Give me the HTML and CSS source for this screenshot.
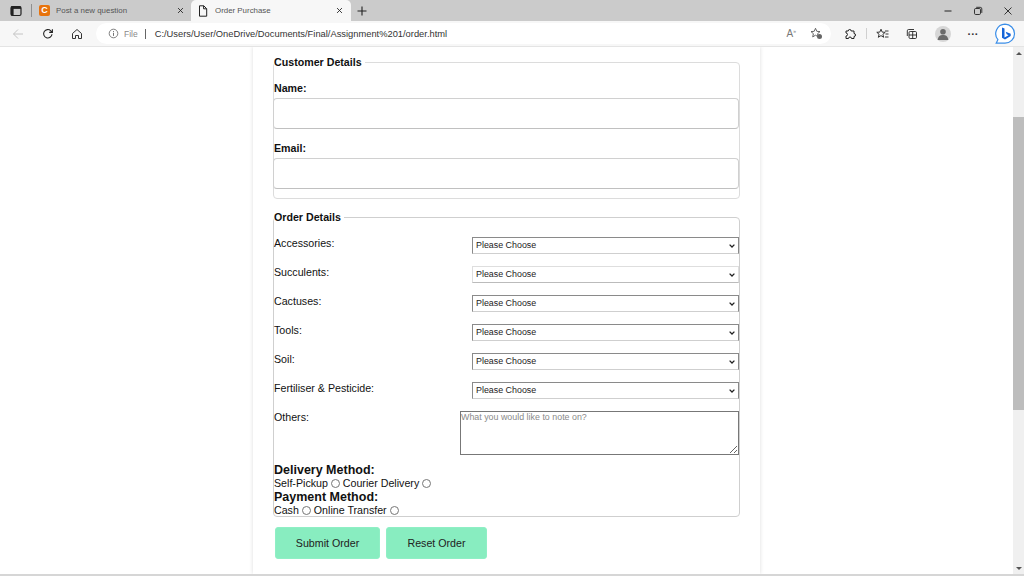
FILE: index.html
```html
<!DOCTYPE html>
<html lang="en">
<head>
<meta charset="utf-8">
<title>Order Purchase</title>
<link rel="stylesheet" href="styles.css">
</head>
<body>
<div class="browser">
  <div class="tabstrip">
    <svg class="tabs-icon" viewBox="0 0 12 12"><rect x="1" y="1.5" width="10" height="9" rx="1.5" fill="none" stroke="#222" stroke-width="1.2"/><rect x="1" y="1.5" width="10" height="2.4" fill="#222"/><rect x="1" y="1.5" width="2.6" height="9" fill="#222"/></svg>
    <span class="tab-sep"></span>
    <div class="tab">
      <span class="favicon">C</span>
      <span class="tab-title">Post a new question</span>
      <svg class="tab-close" viewBox="0 0 8 8"><path d="M1.2 1.2l5.6 5.6M6.8 1.2L1.2 6.8" stroke="#222" stroke-width="1" fill="none"/></svg>
    </div>
    <div class="tab tab-active">
      <svg class="doc-icon" viewBox="0 0 10 12"><path d="M1.5.8h4.3l2.9 2.9v7.5h-7.2zM5.6.8v3h3" fill="none" stroke="#222" stroke-width="1"/></svg>
      <span class="tab-title">Order Purchase</span>
      <svg class="tab-close" viewBox="0 0 8 8"><path d="M1.2 1.2l5.6 5.6M6.8 1.2L1.2 6.8" stroke="#222" stroke-width="1" fill="none"/></svg>
    </div>
    <svg class="new-tab" viewBox="0 0 10 10"><path d="M5 .5v9M.5 5h9" stroke="#222" stroke-width="1.1" fill="none"/></svg>
    <div class="window-controls">
      <svg viewBox="0 0 10 10"><path d="M1.5 5h7" stroke="#222" stroke-width="1" fill="none"/></svg>
      <svg viewBox="0 0 10 10"><rect x="1.5" y="2.5" width="6" height="6" rx="1.2" fill="none" stroke="#222" stroke-width=".9"/><path d="M3.2 1.3h4a1.6 1.6 0 0 1 1.6 1.6v4" fill="none" stroke="#222" stroke-width=".9"/></svg>
      <svg viewBox="0 0 10 10"><path d="M1.5 1.5l7 7M8.5 1.5l-7 7" stroke="#222" stroke-width=".9" fill="none"/></svg>
    </div>
  </div>
  <div class="toolbar">
    <svg class="tool tool-back" viewBox="0 0 12 12"><path d="M11 6H1.500M6 1.500L1.500 6 6 10.500" fill="none" stroke="#c4c4c4" stroke-width="1"/></svg>
    <svg class="tool tool-reload" viewBox="0 0 12 12"><path d="M10 6.200A4.200 4.200 0 1 1 8.800 2.800L10.400 4.400M10.400 1.200v3.200H7.200" fill="none" stroke="#222" stroke-width="1.100"/></svg>
    <svg class="tool tool-home" viewBox="0 0 12 12"><path d="M1.500 5.500L6 1.500l4.500 4v5H7.500V7.500h-3v3h-3z" fill="none" stroke="#333" stroke-width="1"/></svg>
    <div class="omnibox">
      <svg class="info" viewBox="0 0 12 12"><circle cx="6" cy="6" r="4.700" fill="none" stroke="#555" stroke-width=".8"/><path d="M6 5.200v3.400M6 3.300v1" stroke="#555" stroke-width=".9"/></svg>
      <span class="scheme">File</span>
      <span class="omni-sep"></span>
      <span class="url">C:/Users/User/OneDrive/Documents/Final/Assignment%201/order.html</span>
      <span class="read-aloud">A<sup>»</sup></span>
      <svg class="fav-add" viewBox="0 0 13 13"><path d="M5.500 1.300l1.300 3 3.200.3-2.400 2.100.7 3.200-2.800-1.700-2.800 1.700.7-3.200L1 4.600l3.200-.3z" fill="none" stroke="#555" stroke-width=".9"/><circle cx="9.500" cy="9.500" r="2.500" fill="#666"/></svg>
    </div>
    <svg class="tool tool-ext" viewBox="0 0 12 12"><path d="M2 3h2.200a1.500 1.500 0 0 1 3 0H10v2.500a1.500 1.500 0 0 1 0 3V10.500H7.500a1.500 1.500 0 0 0-3 0H2V8a1.500 1.500 0 0 0 0-3z" fill="none" stroke="#222" stroke-width="1"/></svg>
    <span class="tool-sep"></span>
    <svg class="tool tool-favs" viewBox="0 0 13 12"><path d="M5 1.200l1.200 2.900 3 .2-2.300 2 .8 3-2.700-1.700-2.700 1.700.8-3-2.300-2 3-.2zM9 3h3.500M9.500 6h3M9 9h3.500" fill="none" stroke="#222" stroke-width=".9"/></svg>
    <svg class="tool tool-coll" viewBox="0 0 12 12"><rect x="3" y="3.500" width="7.500" height="7" rx="1.200" fill="none" stroke="#222" stroke-width=".9"/><path d="M6.700 3.500v7M3 7h7.500M1.300 8V2.800A1.300 1.300 0 0 1 2.600 1.500H8" fill="none" stroke="#222" stroke-width=".9"/></svg>
    <span class="avatar"><svg viewBox="0 0 16 16"><circle cx="8" cy="5.800" r="2.800" fill="#6b6b6b"/><path d="M2.600 14c.5-3.700 2.600-5 5.400-5s4.900 1.300 5.400 5z" fill="#6b6b6b"/></svg></span>
    <span class="more">···</span>
    <svg class="bing" viewBox="0 0 22 22"><path d="M11 1.200a9.500 9.500 0 0 1 0 19H2.200l1.700-3.500A9.500 9.500 0 0 1 11 1.200z" fill="#fff" stroke="#3b8ee8" stroke-width="1.200"/><path d="M8 4.500l2.500 1v9l4-2.300-1.800-.9-1-2.500 5 2v2.300l-5.700 3.300L8 14.800z" fill="#1464d8"/></svg>
  </div>
  <div class="viewport">
    <div class="page">
      <main class="card">
        <form class="order-form">
          <fieldset class="group group-customer">
            <legend>Customer Details</legend>
            <label class="field-label" for="name">Name:</label>
            <input class="text-input" id="name" type="text">
            <label class="field-label field-label-next" for="email">Email:</label>
            <input class="text-input" id="email" type="email">
          </fieldset>
          <fieldset class="group group-order">
            <legend>Order Details</legend>
            <div class="rows">
              <div class="row"><label>Accessories:</label><select><option>Please Choose</option></select></div>
              <div class="row"><label>Succulents:</label><select class="soft"><option>Please Choose</option></select></div>
              <div class="row"><label>Cactuses:</label><select><option>Please Choose</option></select></div>
              <div class="row"><label>Tools:</label><select><option>Please Choose</option></select></div>
              <div class="row"><label>Soil:</label><select><option>Please Choose</option></select></div>
              <div class="row"><label>Fertiliser &amp; Pesticide:</label><select><option>Please Choose</option></select></div>
              <div class="row"><label>Others:</label><textarea placeholder="What you would like to note on?"></textarea></div>
            </div>
            <div class="methods">
              <h3>Delivery Method:</h3>
              <p>Self-Pickup <input type="radio" name="delivery"> Courier Delivery <input type="radio" name="delivery"></p>
              <h3>Payment Method:</h3>
              <p>Cash <input type="radio" name="payment"> Online Transfer <input type="radio" name="payment"></p>
            </div>
          </fieldset>
          <div class="actions">
            <button class="btn btn-submit" type="submit">Submit Order</button>
            <button class="btn btn-reset" type="reset">Reset Order</button>
          </div>
        </form>
      </main>
    </div>
    <div class="scrollbar">
      <span class="arrow arrow-up"></span>
      <div class="track"><div class="thumb"></div></div>
      <span class="arrow arrow-down"></span>
    </div>
  </div>
  <div class="bottom-edge"></div>
</div>
</body>
</html>
```
FILE: styles.css
```css
* { box-sizing: border-box; }
html, body { margin: 0; height: 100%; overflow: hidden; }
body { font-family: "Liberation Sans", Arial, sans-serif; font-size: 10.670px; color: #111; background: #fff; }
.browser { display: flex; flex-direction: column; width: 1024px; height: 576px; }

.tabstrip { height: 21px; flex: none; display: flex; align-items: center; background: #cbcbcb; }
.tabs-icon { width: 12px; height: 12px; margin-left: 10px; flex: none; }
.tab-sep { width: 1px; height: 13px; background: #8f8f8f; margin: 0 6px 0 9px; flex: none; }
.tab { display: flex; align-items: center; height: 21px; width: 153px; padding: 0 6px 0 1px; flex: none; }
.tab-active { width: 160px; padding: 0 7px 0 7px; background: #f7f7f7; border-radius: 5px 5px 0 0; }
.favicon { width: 11px; height: 11px; border-radius: 2px; background: #e8730c; color: #fff; font-size: 9px; font-weight: bold; line-height: 11px; text-align: center; flex: none; }
.doc-icon { width: 10px; height: 12px; flex: none; }
.tab-title { flex: 1; margin-left: 6px; font-size: 7.900px; color: #555; white-space: nowrap; overflow: hidden; }
.tab-active .tab-title { margin-left: 7px; }
.tab-close { width: 7px; height: 7px; flex: none; margin-right: 1px; }
.new-tab { width: 10px; height: 10px; margin-left: 6px; flex: none; }
.window-controls { margin-left: auto; display: flex; gap: 20px; padding-right: 11px; }
.window-controls svg { width: 10px; height: 10px; display: block; }

.toolbar { height: 26px; flex: none; display: flex; align-items: center; background: #f7f7f7; border-bottom: 1px solid #e4e4e4; }
.tool { width: 12px; height: 12px; flex: none; }
.tool-back { margin-left: 12px; }
.tool-reload { margin-left: 18px; }
.tool-home { margin-left: 17px; }
.omnibox { width: 735px; height: 21px; margin-left: 13px; flex: none; display: flex; align-items: center; background: #fff; border-radius: 11px; padding: 0 8px 0 12px; }
.info { width: 11px; height: 11px; flex: none; }
.scheme { margin-left: 5px; font-size: 8.500px; color: #8a8a8a; }
.omni-sep { width: 1px; height: 10px; background: #666; margin: 0 9px 0 7px; flex: none; }
.url { flex: 1; font-size: 9.330px; color: #333; white-space: nowrap; }
.read-aloud { font-size: 10px; color: #777; }
.read-aloud sup { font-size: 5px; }
.fav-add { width: 13px; height: 13px; margin-left: 14px; flex: none; }
.tool-ext { margin-left: 13px; }
.tool-sep { width: 1px; height: 11px; background: #d0d0d0; margin: 0 9px 0 10px; flex: none; }
.tool-favs { width: 13px; }
.tool-coll { margin-left: 17px; }
.avatar { width: 16px; height: 16px; margin-left: 17px; border-radius: 50%; background: #d6d6d6; flex: none; overflow: hidden; }
.avatar svg { display: block; width: 16px; height: 16px; }
.more { margin-left: 15px; width: 14px; font-size: 11px; font-weight: bold; color: #333; text-align: center; flex: none; }
.bing { width: 22px; height: 22px; margin-left: 14px; flex: none; }

.viewport { flex: 1; min-height: 0; display: flex; overflow: hidden; }
.page { flex: 1; min-width: 0; overflow: hidden; }
.card { width: 507px; height: 100%; margin-left: 253px; background: #fff; box-shadow: 0 0 4px rgba(0, 0, 0, .14); padding: 8px 20px 0; }
.order-form { display: flex; flex-direction: column; }

.group { margin: 0; padding: 0; border: 1px solid #dcdcdc; border-radius: 4px; min-width: 0; }
.group legend { padding: 0 3px 0 0; margin: 0; font-weight: bold; font-size: 10.670px; line-height: 14px; }
.group-customer { height: 144px; padding-top: 12px; }
.group-order { margin-top: 11px; height: 307px; border-color: #cfcfcf; }
.field-label { display: block; font-weight: bold; line-height: 14px; height: 17px; }
.field-label-next { margin-top: 12px; }
.text-input { display: block; height: 31px; margin: 0 -1px; width: calc(100% + 1px); border: 1px solid #d0d0d0; border-bottom-color: #c0c0c0; border-radius: 4px; background: #fff; }

.rows { display: flex; flex-direction: column; gap: 12px; padding-top: 13px; }
.row { display: flex; justify-content: space-between; align-items: flex-start; line-height: 13px; height: 17px; }
.row:last-child { height: 44px; }
.row select { appearance: none; width: 267px; height: 17px; padding: 0 0 2px 3px; font-family: "Liberation Sans", Arial, sans-serif; font-size: 8.900px; color: #222; background: #fff url("data:image/svg+xml,%3Csvg xmlns='http://www.w3.org/2000/svg' width='6' height='4'%3E%3Cpath d='M.6.6L3 3l2.400-2.400' fill='none' stroke='%23222' stroke-width='1.300'/%3E%3C/svg%3E") no-repeat right 3px center; border: 1px solid #8a8a8a; border-bottom-color: #cfcfcf; border-radius: 0; }
.row select.soft { border-color: #dedede; border-bottom-color: #bbb; }
.row textarea { display: block; width: 279px; height: 44px; margin: 0; padding: 0; font-family: "Liberation Sans", Arial, sans-serif; font-size: 8.900px; border: 1px solid #777; border-radius: 0; background: #fff; }
.row textarea::placeholder { color: #8a8a8a; }

.methods { padding-top: 8px; }
.methods h3 { margin: 0; font-size: 12.500px; line-height: 14px; }
.methods p { margin: 0; line-height: 13px; }
.methods input { width: 9px; height: 9px; margin: 0 0 1px; vertical-align: middle; }

.actions { display: flex; gap: 6px; padding: 10px 0 0 2px; }
.btn { height: 32px; border: 1px solid #8fefc5; border-radius: 3px; background: #88edc0; color: #222; font-family: "Liberation Sans", Arial, sans-serif; font-size: 10.670px; }
.btn-submit { width: 105px; }
.btn-reset { width: 101px; }

.scrollbar { width: 11px; flex: none; display: flex; flex-direction: column; align-items: center; background: #f0f0f0; }
.arrow { width: 0; height: 0; flex: none; border-left: 3px solid transparent; border-right: 3px solid transparent; }
.arrow-up { border-bottom: 3px solid #555; margin: 5px 0; }
.arrow-down { border-top: 3px solid #555; margin: 5px 0 4px; }
.track { flex: 1; width: 100%; padding-top: 57px; }
.thumb { height: 293px; background: #bdbdbd; }
.bottom-edge { height: 2px; flex: none; background: #d6d6d6; }
```
